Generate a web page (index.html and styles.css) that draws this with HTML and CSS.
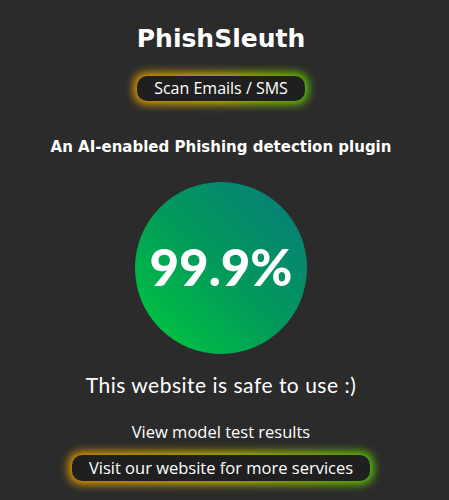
FILE: index.html
```html
<!DOCTYPE html>
<html>
<head>
<meta charset="utf-8">
<link rel="stylesheet" href="styles.css">
</head>
<body>
<main class="app">
  <h1 class="title">PhishSleuth</h1>
  <div class="glow-btn scan"><span class="btn-inner">Scan Emails / SMS</span></div>
  <p class="subtitle">An AI-enabled Phishing detection plugin</p>
  <div class="score"><span class="score-text">99.9%</span></div>
  <p class="verdict">This website is safe to use :)</p>
  <p class="link">View model test results</p>
  <div class="glow-btn visit"><span class="btn-inner">Visit our website for more services</span></div>
</main>
</body>
</html>
```
FILE: styles.css
```css
html, body {
  margin: 0;
  padding: 0;
  background: #2b2b2b;
  height: 100%;
  overflow: hidden;
}
.app {
  width: 442px;
  display: flex;
  flex-direction: column;
  align-items: center;
  color: #fff;
  font-family: "Open Sans", sans-serif;
}
.title {
  margin: 22px 0 0;
  font-family: "DejaVu Sans", sans-serif;
  font-weight: bold;
  font-size: 25px;
  line-height: 34px;
  letter-spacing: 0;
}
.glow-btn {
  position: relative;
  border-radius: 10px;
}
.glow-btn::before {
  content: "";
  position: absolute;
  inset: -3px;
  border-radius: 12px;
  background: linear-gradient(90deg, #f0a000, #d0c000 50%, #60d000);
  filter: blur(5px);
}
.btn-inner {
  position: relative;
  display: block;
  background: #1f1f1f;
  border-radius: 10px;
  font-size: 16px;
  line-height: 25px;
  padding: 0 17px;
  color: #fff;
}
.scan {
  margin-top: 20px;
}
.subtitle {
  margin: 36px 0 0;
  font-family: "DejaVu Sans", sans-serif;
  font-weight: bold;
  font-size: 15px;
  line-height: 20px;
  letter-spacing: 0;
}
.score {
  margin-top: 25px;
  width: 172px;
  height: 172px;
  border-radius: 50%;
  background: linear-gradient(45deg, #00cc3c 0%, #02995a 50%, #087a7e 100%);
  display: flex;
  align-items: center;
  justify-content: center;
}
.score-text {
  font-family: "Lato", sans-serif;
  font-weight: 900;
  font-size: 51px;
  margin-top: -4px;
}
.verdict {
  margin: 16px 0 0;
  font-family: "Lato", sans-serif;
  font-size: 21px;
  line-height: 30px;
  letter-spacing: 0.5px;
}
.link {
  margin: 20px 0 0;
  font-size: 16.5px;
  line-height: 24px;
}
.visit {
  margin-top: 11px;
}
.visit .btn-inner {
  font-size: 16.5px;
  line-height: 26px;
  padding: 0 17px;
}
```
